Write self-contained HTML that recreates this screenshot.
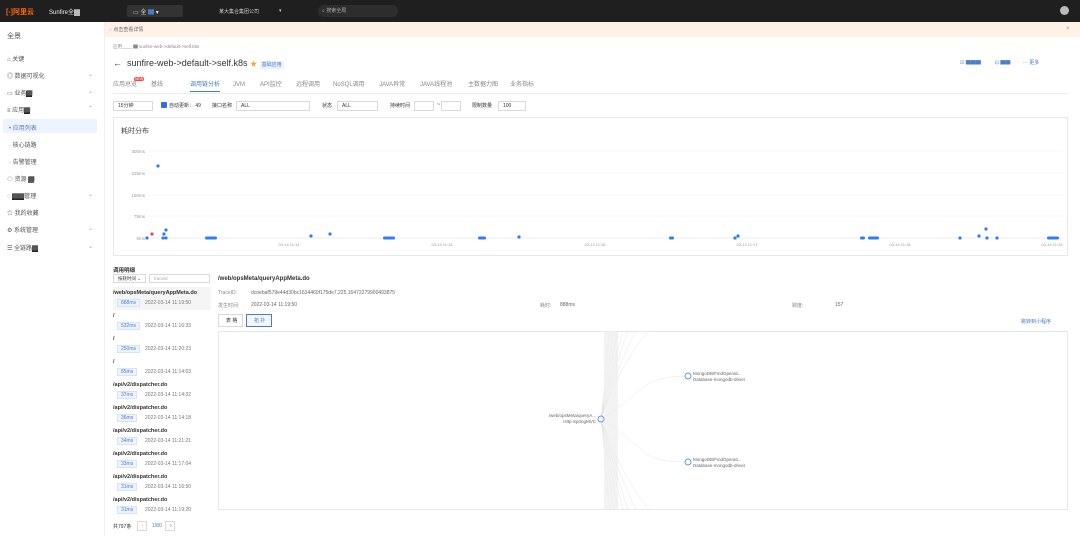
<!DOCTYPE html>
<html><head><meta charset="utf-8"><style>
*{margin:0;padding:0;box-sizing:border-box}
body{width:1080px;height:536px;overflow:hidden;background:#fff;font-family:"Liberation Sans","Noto Sans CJK SC",sans-serif;color:#333;position:relative;font-size:6px}
.a{position:absolute;white-space:nowrap}
.top{left:0;top:0;width:1080px;height:22px;background:#1f1f1f}
.side{left:0;top:22px;width:105px;height:514px;background:#fff;border-right:1px solid #eee}
.si{left:7px;font-size:6px;color:#555}
.chev{font-size:6px;color:#999;left:88px}
.box{border:1px solid #e8e8e8;background:#fff}
.inp{border:1px solid #d9d9d9;height:10px;background:#fff;font-size:5px;padding-left:4px;line-height:9px;color:#333}
.tab{font-size:6px;color:#888;top:81px;line-height:9px;height:9px}
.li{left:113px;font-size:5.5px;font-weight:bold;color:#333}
.tg{left:117px;font-size:5px;color:#4a7cc9;background:#eef4ff;border:1px solid #d6e4fb;padding:0 3px;height:8px;line-height:7px}
.dt{left:145px;font-size:5px;color:#777}
</style></head><body>
<div class="a top"></div>
<div class="a" style="left:6px;top:7px;font-size:7px;color:#ff6a00;font-weight:bold">[-]阿里云</div>
<div class="a" style="left:49px;top:7px;font-size:6px;color:#eee">Sunfire全<span style="background:#bbb;color:#bbb">▇</span></div>
<div class="a" style="left:127px;top:5px;width:56px;height:12px;background:#333;border-radius:2px"></div>
<div class="a" style="left:133px;top:7px;font-size:6px;color:#ddd">▭ 全 <span style="color:#4a7cc9">▇</span> ▾</div>
<div class="a" style="left:219px;top:8px;font-size:5px;color:#ccc">某大集合集团公司</div>
<div class="a" style="left:279px;top:8px;font-size:5px;color:#ccc">▾</div>
<div class="a" style="left:318px;top:5px;width:80px;height:12px;background:#2d2d2d;border-radius:6px"></div>
<div class="a" style="left:322px;top:7px;font-size:5px;color:#aaa">⌕ 搜索全局</div>
<div class="a" style="left:1060px;top:6px;width:9px;height:9px;border-radius:50%;background:#bbb"></div>

<div class="a side"></div>
<div class="a si" style="top:31px;font-size:7px">全景</div>
<div class="a si" style="top:54px">⌂ 关键</div>
<div class="a si" style="top:71px">◎ 数据可视化</div><div class="a chev" style="top:71px">⌄</div>
<div class="a si" style="top:88px">▭ 业务<span style="background:#222">▇</span></div><div class="a chev" style="top:88px">⌄</div>
<div class="a si" style="top:105px">≡ 应用<span style="background:#222">▇</span></div><div class="a chev" style="top:105px">⌃</div>
<div class="a" style="left:3px;top:119px;width:94px;height:14px;background:#eef4ff"></div>
<div class="a si" style="top:123px;left:9px;color:#4a7cc9">• 应用列表</div>
<div class="a si" style="top:140px;left:9px">· 核心链路</div>
<div class="a si" style="top:157px;left:9px">· 告警管理</div>
<div class="a si" style="top:174px">☁ 资源 <span style="background:#666">▇</span></div>
<div class="a si" style="top:191px">◌ <span style="background:#222">▇▇</span>管理</div><div class="a chev" style="top:191px">⌄</div>
<div class="a si" style="top:208px">☆ 我的收藏</div>
<div class="a si" style="top:225px">⚙ 系统管理</div><div class="a chev" style="top:225px">⌄</div>
<div class="a si" style="top:243px">☰ 全链路<span style="background:#222">▇</span></div><div class="a chev" style="top:243px">⌄</div>

<div class="a" style="left:105px;top:22px;width:975px;height:15px;background:#fef2e6"></div>
<div class="a" style="left:109px;top:26px;font-size:5px;color:#666">◌ 点击查看详情</div>
<div class="a" style="left:1066px;top:26px;font-size:6px;color:#999">×</div>
<div class="a" style="left:113px;top:44px;font-size:4.5px;color:#888">应用____ ▇ sunfire-web->default->self.k8s</div>
<div class="a" style="left:113px;top:58px;font-size:9px;color:#333">← &nbsp;sunfire-web-&gt;default-&gt;self.k8s <span style="color:#f5a623;font-size:7px">★</span> <span style="font-size:5px;color:#4a7cc9;background:#eaf2ff;padding:1px 2px">基础应用</span></div>
<div class="a" style="left:960px;top:59px;font-size:5px;color:#4a7cc9">☑ ▇▇▇ &nbsp;&nbsp;&nbsp;&nbsp;&nbsp;&nbsp;&nbsp;&nbsp; ⊡ ▇▇ &nbsp;&nbsp;&nbsp;&nbsp;&nbsp;&nbsp;&nbsp; ··· 更多</div>
<div class="a tab" style="left:113px">应用总览</div>
<div class="a" style="left:134px;top:77px;font-size:3.5px;background:#f44;color:#fff;padding:0 1px;border-radius:2px">NEW</div>
<div class="a tab" style="left:151px">基线</div>
<div class="a tab" style="left:190px;color:#4a7cc9">调用链分析</div>
<div class="a" style="left:190px;top:91px;width:30px;height:1px;background:#4a7cc9"></div>
<div class="a tab" style="left:233px">JVM</div>
<div class="a tab" style="left:260px">API监控</div>
<div class="a tab" style="left:296px">远程调用</div>
<div class="a tab" style="left:333px">NoSQL调用</div>
<div class="a tab" style="left:379px">JAVA异常</div>
<div class="a tab" style="left:420px">JAVA线程池</div>
<div class="a tab" style="left:468px">主数据力图</div>
<div class="a tab" style="left:510px">业务指标</div>
<div class="a" style="left:113px;top:93px;width:955px;height:1px;background:#eee"></div>

<div class="a inp" style="left:113px;top:101px;width:40px">15分钟</div>
<div class="a" style="left:161px;top:102px;width:6px;height:6px;background:#2f6fde;border-radius:1px"></div>
<div class="a" style="left:169px;top:102px;font-size:5px">自动更新： 49</div>
<div class="a" style="left:212px;top:102px;font-size:5px">接口名称</div>
<div class="a inp" style="left:236px;top:101px;width:74px">ALL</div>
<div class="a" style="left:322px;top:102px;font-size:5px">状态</div>
<div class="a inp" style="left:337px;top:101px;width:41px">ALL</div>
<div class="a" style="left:390px;top:102px;font-size:5px">持续时间</div>
<div class="a inp" style="left:414px;top:101px;width:20px"></div>
<div class="a" style="left:437px;top:102px;font-size:5px">~</div>
<div class="a inp" style="left:441px;top:101px;width:20px"></div>
<div class="a" style="left:472px;top:102px;font-size:5px">限制数量</div>
<div class="a inp" style="left:498px;top:101px;width:28px">100</div>

<div class="a box" style="left:113px;top:117px;width:955px;height:139px"></div>
<div class="a" style="left:121px;top:126px;font-size:7px;color:#444">耗时分布</div>
<svg class="a" style="left:113px;top:117px" width="955" height="139">
<g stroke="#f0f0f0" stroke-width="0.6"><line x1="35" y1="34" x2="950" y2="34"/><line x1="35" y1="56" x2="950" y2="56"/><line x1="35" y1="78" x2="950" y2="78"/><line x1="35" y1="99" x2="950" y2="99"/><line x1="35" y1="121" x2="950" y2="121" stroke="#ddd"/></g>
<g font-size="4.5" fill="#999" text-anchor="end" font-family="Liberation Sans"><text x="32" y="36">300ms</text><text x="32" y="58">225ms</text><text x="32" y="80">150ms</text><text x="32" y="101">75ms</text><text x="32" y="123">0ms</text></g>
<g font-size="4" fill="#999" text-anchor="middle" font-family="Liberation Sans"><text x="176" y="129">03-14 11:14</text><text x="329" y="129">03-14 11:15</text><text x="482" y="129">03-14 11:16</text><text x="634" y="129">03-14 11:17</text><text x="787" y="129">03-14 11:18</text><text x="939" y="129">03-14 11:19</text></g>
<g fill="#2f7df6"><circle cx="34" cy="121" r="1.6"/><circle cx="45" cy="49" r="1.6"/><circle cx="50" cy="121" r="1.6"/><circle cx="51" cy="117" r="1.6"/><circle cx="53" cy="113" r="1.6"/><circle cx="53" cy="121" r="1.6"/><circle cx="198" cy="119" r="1.6"/><circle cx="217" cy="117" r="1.6"/><circle cx="406" cy="120" r="1.6"/><circle cx="622" cy="121" r="1.6"/><circle cx="625" cy="119" r="1.6"/><circle cx="847" cy="121" r="1.6"/><circle cx="866" cy="119" r="1.6"/><circle cx="873" cy="112" r="1.6"/><circle cx="874" cy="121" r="1.6"/><circle cx="884" cy="121" r="1.6"/>
<rect x="92" y="119.5" width="12" height="3" rx="1.5"/><rect x="270" y="119.5" width="12" height="3" rx="1.5"/><rect x="365" y="119.5" width="8" height="3" rx="1.5"/><rect x="556" y="119.5" width="5" height="3" rx="1.5"/><rect x="747" y="119.5" width="5" height="3" rx="1.5"/><rect x="755" y="119.5" width="11" height="3" rx="1.5"/><rect x="934" y="119.5" width="12" height="3" rx="1.5"/></g>
<circle cx="39" cy="117" r="1.6" fill="#f04a3a"/>
</svg>

<div class="a" style="left:113px;top:266px;font-size:5.5px;font-weight:bold">调用明细</div>
<div class="a inp" style="left:113px;top:274px;width:33px;height:9px;font-size:4.5px;line-height:8px">按耗时间 ⌄</div>
<div class="a inp" style="left:149px;top:274px;width:61px;height:9px;font-size:4.5px;line-height:8px;color:#aaa">traceid</div>
<div class="a" style="left:113px;top:287px;width:98px;height:23px;background:#f5f5f5"></div>
<div class="a li" style="top:290px">/web/opsMeta/queryAppMeta.do</div><div class="a tg" style="top:299px">888ms</div><div class="a dt" style="top:300px">2022-03-14 11:19:50</div>
<div class="a li" style="top:313px">/</div><div class="a tg" style="top:322px">532ms</div><div class="a dt" style="top:323px">2022-03-14 11:16:33</div>
<div class="a li" style="top:336px">/</div><div class="a tg" style="top:345px">250ms</div><div class="a dt" style="top:346px">2022-03-14 11:20:23</div>
<div class="a li" style="top:359px">/</div><div class="a tg" style="top:368px">85ms</div><div class="a dt" style="top:369px">2022-03-14 11:14:03</div>
<div class="a li" style="top:382px">/api/v2/dispatcher.do</div><div class="a tg" style="top:391px">37ms</div><div class="a dt" style="top:392px">2022-03-14 11:14:32</div>
<div class="a li" style="top:405px">/api/v2/dispatcher.do</div><div class="a tg" style="top:414px">36ms</div><div class="a dt" style="top:415px">2022-03-14 11:14:18</div>
<div class="a li" style="top:428px">/api/v2/dispatcher.do</div><div class="a tg" style="top:437px">34ms</div><div class="a dt" style="top:438px">2022-03-14 11:21:21</div>
<div class="a li" style="top:451px">/api/v2/dispatcher.do</div><div class="a tg" style="top:460px">33ms</div><div class="a dt" style="top:461px">2022-03-14 11:17:04</div>
<div class="a li" style="top:474px">/api/v2/dispatcher.do</div><div class="a tg" style="top:483px">31ms</div><div class="a dt" style="top:484px">2022-03-14 11:16:50</div>
<div class="a li" style="top:497px">/api/v2/dispatcher.do</div><div class="a tg" style="top:506px">31ms</div><div class="a dt" style="top:507px">2022-03-14 11:19:20</div>
<div class="a" style="left:113px;top:523px;font-size:5px">共797条</div>
<div class="a inp" style="left:137px;top:521px;width:10px;height:10px;font-size:5px;color:#bbb">‹</div>
<div class="a" style="left:152px;top:523px;font-size:5px;color:#4a7cc9">1/80</div>
<div class="a inp" style="left:165px;top:521px;width:10px;height:10px;font-size:5px">›</div>

<div class="a" style="left:218px;top:276px;font-size:6px;font-weight:bold">/web/opsMeta/queryAppMeta.do</div>
<div class="a" style="left:218px;top:290px;font-size:5px;color:#888">TraceID:</div>
<div class="a" style="left:251px;top:290px;font-size:5px;color:#666">dcoebaf579e44d30bc1634460f175de7.225.16472279900493875</div>
<div class="a" style="left:218px;top:302px;font-size:5px;color:#888">发生时间:</div>
<div class="a" style="left:251px;top:302px;font-size:5px;color:#666">2022-03-14 11:19:50</div>
<div class="a" style="left:540px;top:302px;font-size:5px;color:#888">耗时:</div>
<div class="a" style="left:560px;top:302px;font-size:5px;color:#666">888ms</div>
<div class="a" style="left:792px;top:302px;font-size:5px;color:#888">跨度:</div>
<div class="a" style="left:835px;top:302px;font-size:5px;color:#666">157</div>
<div class="a inp" style="left:218px;top:314px;width:25px;height:13px;line-height:12px;padding-left:7px">表 格</div>
<div class="a inp" style="left:246px;top:314px;width:26px;height:13px;line-height:12px;padding-left:7px;border-color:#4a7cc9;color:#4a7cc9;background:#f2f7ff">拓 扑</div>
<div class="a" style="left:1021px;top:318px;font-size:5px;color:#4a7cc9">跳转到小程序</div>
<div class="a box" style="left:218px;top:331px;width:850px;height:179px"></div>
<svg class="a" style="left:218px;top:331px" width="850" height="179">
<g fill="none" stroke="#ddd" stroke-width="0.4">
<path d="M383 88 C388 40 390 10 392 0"/><path d="M383 88 C390 40 394 10 396 0"/><path d="M383 88 C392 40 398 10 400 0"/><path d="M383 88 C394 40 402 10 405 0"/><path d="M383 88 C396 40 406 10 410 0"/><path d="M383 88 C398 40 412 10 418 0"/><path d="M383 88 C400 40 420 10 432 0"/>
<path d="M383 88 C388 136 390 166 392 179"/><path d="M383 88 C390 136 394 166 396 179"/><path d="M383 88 C392 136 398 166 400 179"/><path d="M383 88 C394 136 402 166 405 179"/><path d="M383 88 C396 136 406 166 410 179"/><path d="M383 88 C398 136 412 166 418 179"/><path d="M383 88 C400 136 420 166 432 179"/>
<path d="M383 88 C430 60 420 46 468 45"/><path d="M383 88 C430 116 420 131 468 131"/>
</g>
<rect x="386" y="0" width="14" height="179" fill="#eee" opacity="0.7"/>
<g fill="#fff" stroke="#5b8ff9" stroke-width="0.9"><circle cx="383" cy="88" r="3"/><circle cx="470" cy="45" r="3"/><circle cx="470" cy="131" r="3"/></g>
<g font-size="4.5" fill="#666" font-family="Liberation Sans"><text x="378" y="86" text-anchor="end">/web/opsMeta/queryA...</text><text x="378" y="92" text-anchor="end">Http-SpringMVC</text>
<text x="475" y="44">MongoDB/FindOperati...</text><text x="475" y="50">Database-mongodb-driver</text>
<text x="475" y="130">MongoDB/FindOperati...</text><text x="475" y="136">Database-mongodb-driver</text></g>
</svg>
</body></html>
